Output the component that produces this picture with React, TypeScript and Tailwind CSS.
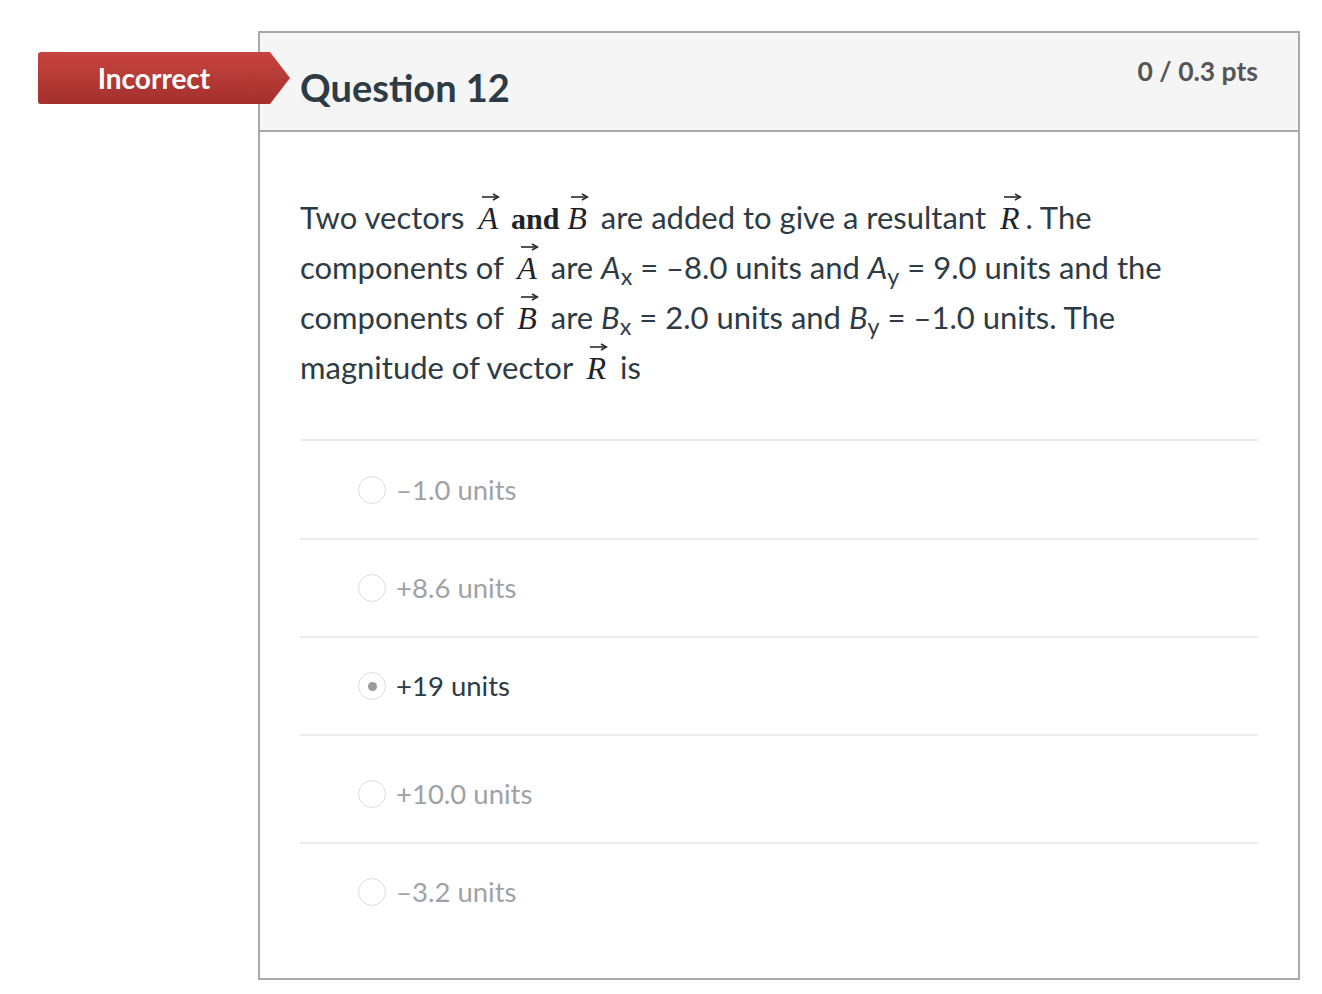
import React from "react";

const ANSWERS = [
  { text: "–1.0 units", selected: false, row: "h-[99px]" },
  { text: "+8.6 units", selected: false, row: "h-[98px]" },
  { text: "+19 units", selected: true, row: "h-[98px]" },
  { text: "+10.0 units", selected: false, row: "h-[108px] pt-[10px]" },
  { text: "–3.2 units", selected: false, row: "h-[98px]" },
];

function Vec({ letter }: { letter: string }) {
  return (
    <span className="relative inline-block px-[6px] align-baseline font-['Liberation_Serif',serif] text-[32px] italic leading-none text-[#1e2328]">
      {letter}
      <svg
        className="absolute left-[9px] top-[-9px]"
        width="19"
        height="8"
        viewBox="0 0 19 8"
        fill="none"
      >
        <path d="M1 4H16" stroke="#2a2a2a" strokeWidth="1.6" />
        <path d="M12 1L17.5 4L12 7" stroke="#2a2a2a" strokeWidth="1.5" fill="none" />
      </svg>
    </span>
  );
}

function Radio({ selected }: { selected: boolean }) {
  return (
    <span className="flex h-[28px] w-[28px] shrink-0 items-center justify-center rounded-full border border-[#dcdcdc] bg-white">
      {selected ? <span className="h-[9px] w-[9px] rounded-full bg-[#9a9a9a]" /> : null}
    </span>
  );
}

export default function App() {
  return (
    <div className="relative min-h-[994px] bg-white pl-[258px] pt-[31px] font-['Lato','Noto_Sans',sans-serif]">
      <div className="absolute left-[38px] top-[52px] flex h-[52px] w-[252px] items-center justify-center rounded-l-[3px] bg-linear-to-b from-[#c7443f] to-[#a3302c] pr-[20px] shadow-[0_1px_1px_rgba(0,0,0,0.25)] [clip-path:polygon(0_0,232px_0,100%_50%,232px_100%,0_100%)]">
        <span className="text-[28px] font-bold text-white">Incorrect</span>
      </div>

      <div className="w-[1042px] border-2 border-[#a9a9a9]">
        <div className="flex h-[99px] justify-between border-b-2 border-[#a9a9a9] bg-[#f5f5f5] px-[40px]">
          <h2 className="pt-[31px] text-[38px] font-bold leading-[46px] text-[#2d3b45]">
            Question 12
          </h2>
          <span className="pt-[22px] text-[26.5px] font-bold leading-[32px] text-[#555555]">
            0 / 0.3 pts
          </span>
        </div>

        <div className="px-[40px] pb-[38px] pt-[60px]">
          <p className="text-[31px] leading-[50px] text-[#2d3b45]">
            Two vectors <Vec letter="A" />
            <span className="ml-[7px] mr-[2px] font-['Liberation_Serif',serif] text-[30px] font-bold leading-none text-[#1e2328]">
              and
            </span>
            <Vec letter="B" /> are added to give a resultant <Vec letter="R" />. The
            <br />
            components of <Vec letter="A" /> are <i>A</i>
            <sub>x</sub> = –8.0 units and <i>A</i>
            <sub>y</sub> = 9.0 units and the
            <br />
            components of <Vec letter="B" /> are <i>B</i>
            <sub>x</sub> = 2.0 units and <i>B</i>
            <sub>y</sub> = –1.0 units. The
            <br />
            magnitude of vector <Vec letter="R" /> is
          </p>

          <div className="mt-[47px]">
            {ANSWERS.map((a) => (
              <div
                key={a.text}
                className={`flex items-center gap-[10px] border-t-2 border-[#ebebeb] pl-[58px] ${a.row}`}
              >
                <Radio selected={a.selected} />
                <span
                  className={`text-[27.5px] ${a.selected ? "text-[#2d3b45]" : "text-[#9ea3a8]"}`}
                >
                  {a.text}
                </span>
              </div>
            ))}
          </div>
        </div>
      </div>
    </div>
  );
}
